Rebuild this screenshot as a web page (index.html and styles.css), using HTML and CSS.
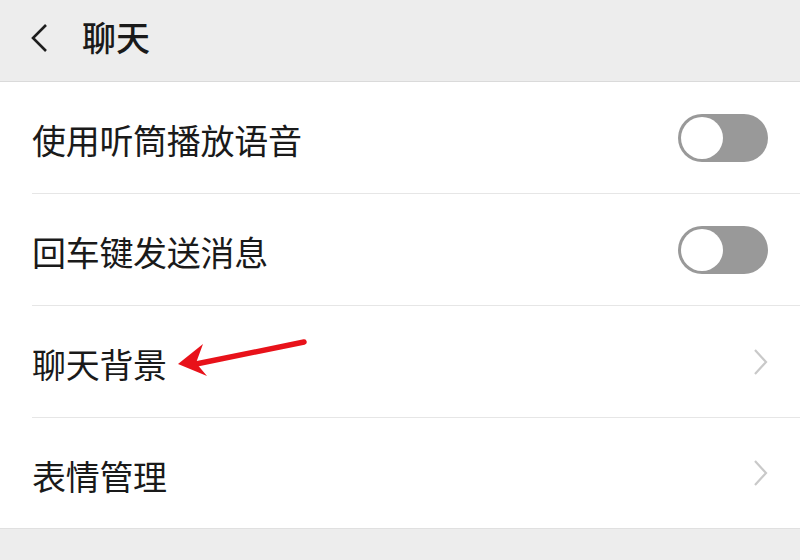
FILE: index.html
```html
<!DOCTYPE html>
<html lang="zh">
<head>
  <meta charset="UTF-8">
  <title>聊天</title>
  <link rel="stylesheet" href="styles.css">
</head>
<body>

<!-- Barra in alto -->
<div class="topbar">
  <svg class="back" width="20" height="30" viewBox="0 0 20 30">
    <path d="M17 2 L4 15 L17 28" fill="none" stroke="#1e1e1e" stroke-width="2.6"/>
  </svg>
  <span class="title">聊天</span>
</div>

<div class="list">
  <div class="row">
    <span class="label">使用听筒播放语音</span>
    <span class="switch"><span class="knob"></span></span>
  </div>
  <div class="row">
    <span class="label">回车键发送消息</span>
    <span class="switch"><span class="knob"></span></span>
  </div>
  <div class="row">
    <span class="label">聊天背景</span>
    <svg class="arrow-right" width="16" height="28" viewBox="0 0 16 28">
      <path d="M2 2 L13 14 L2 26" fill="none" stroke="#c9c9c9" stroke-width="2.2"/>
    </svg>
    <!-- Freccia rossa sopra -->
    <svg class="mark" width="140" height="50" viewBox="170 330 140 50">
      <path d="M304 342 L196 364" stroke="#e8121a" stroke-width="5.5" stroke-linecap="round" fill="none"/>
      <path d="M178 364 L203 344 L196 363 L207 376 Z" fill="#e8121a"/>
    </svg>
  </div>
  <div class="row">
    <span class="label">表情管理</span>
    <svg class="arrow-right" width="16" height="28" viewBox="0 0 16 28">
      <path d="M2 2 L13 14 L2 26" fill="none" stroke="#c9c9c9" stroke-width="2.2"/>
    </svg>
  </div>
</div>

</body>
</html>
```

FILE: styles.css
```css
body {
  margin: 0;
  padding: 0;
  width: 800px;
  height: 560px;
  overflow: hidden;
  background-color: #ededed;
  font-family: "Noto Sans CJK SC", "Noto Sans", sans-serif;
  color: #1a1a1a;
}

/* Barra in alto */
.topbar {
  height: 81px;
  display: flex;
  align-items: center;
  padding-left: 29px;
  background-color: #ededed;
  border-bottom: 1px solid #dadada;
}

.back {
  margin-right: 33px;
  margin-top: -6px;
}

.title {
  font-size: 34px;
  font-weight: 500;
  margin-top: -8px;
}

/* Lista impostazioni */
.list {
  background-color: #ffffff;
  padding-left: 32px;
  border-bottom: 1px solid #e0e0e0;
}

.row {
  position: relative;
  height: 111px;
  display: flex;
  align-items: center;
  justify-content: space-between;
  padding-right: 32px;
  border-bottom: 1px solid #e6e6e6;
}

.row:last-child {
  border-bottom: none;
  height: 110px;
}

.label {
  font-size: 34px;
  letter-spacing: -0.3px;
  margin-top: 4px;
}

/* Interruttore spento */
.switch {
  width: 90px;
  height: 48px;
  border-radius: 24px;
  background-color: #999999;
  display: flex;
  align-items: center;
  padding-left: 3px;
  box-sizing: border-box;
}

.knob {
  width: 42px;
  height: 42px;
  border-radius: 50%;
  background-color: #ffffff;
}

.arrow-right {
  margin-right: -1px;
}

.mark {
  position: absolute;
  left: 138px;
  top: 24px;
}
```
